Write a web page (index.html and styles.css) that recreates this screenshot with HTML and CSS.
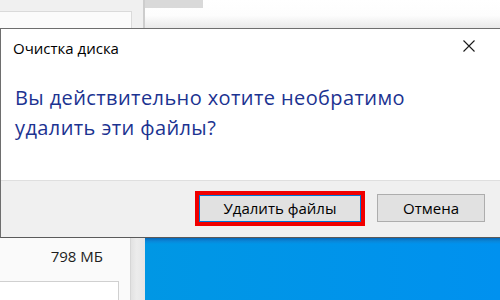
FILE: index.html
```html
<!DOCTYPE html>
<html lang="ru">
<head>
    <meta charset="UTF-8">
    <title>Очистка диска</title>
    <link rel="stylesheet" href="styles.css">
</head>
<body>
    <div class="screen">
        <div class="top-view">
            <div class="side-panel">
                <div class="inner-box"></div>
            </div>
            <div class="divider"></div>
            <div class="window-area">
                <div class="tab"></div>
            </div>
        </div>

        <div class="dialog">
            <div class="dialog-head">
                <div class="title">Очистка диска</div>
                <svg class="close" width="12" height="12" viewBox="0 0 12 12">
                    <path d="M0.5 0.5 L11.5 11.5 M11.5 0.5 L0.5 11.5" stroke="#1a1a1a" stroke-width="1.1" fill="none" />
                </svg>
            </div>
            <div class="dialog-body">
                <p class="question">Вы действительно хотите необратимо<br>удалить эти файлы?</p>
            </div>
            <div class="dialog-foot">
                <div class="mark">
                    <button class="btn default">Удалить файлы</button>
                </div>
                <button class="btn">Отмена</button>
            </div>
        </div>

        <div class="bottom-view">
            <div class="list-panel">
                <div class="size">798 МБ</div>
                <div class="list-box"></div>
            </div>
            <div class="strip"></div>
            <div class="desktop"></div>
        </div>
    </div>
</body>
</html>
```

FILE: styles.css
```css
html, body {
    width: 500px;
    height: 300px;
    margin: 0;
    overflow: hidden;
}

.screen {
    display: flex;
    flex-direction: column;
    width: 500px;
    height: 300px;
    font-family: "Open Sans", "Noto Sans", sans-serif;
}

/* верх: окно под диалогом */
.top-view {
    display: flex;
    height: 28px;
}
.top-view > .side-panel {
    display: flex;
    flex-direction: column;
    justify-content: flex-end;
    width: 143px;
    background-color: #f0f0f0;
}
.top-view > .side-panel > .inner-box {
    width: 131px;
    height: 16px;
    border-top: 1px solid #dadada;
    border-right: 1px solid #dadada;
    background-color: #fbfbfb;
}
.top-view > .divider {
    width: 2px;
    background-color: #cdcdcd;
}
.top-view > .window-area {
    flex: 1;
    background: linear-gradient(to bottom, #ffffff 0%, #fdfdfd 55%, #e9e9e9 100%);
}
.top-view > .window-area > .tab {
    width: 58px;
    height: 8px;
    background-color: #d9d9d9;
}

/* диалог */
.dialog {
    display: flex;
    flex-direction: column;
    height: 208px;
    border-top: 1px solid #6e6e6e;
    border-left: 1px solid #6e6e6e;
    border-bottom: 1px solid #5a5a5a;
    background-color: #ffffff;
}
.dialog > .dialog-head {
    display: flex;
    justify-content: space-between;
    align-items: flex-start;
    padding: 9px 25px 0 12px;
}
.dialog > .dialog-head > .title {
    color: #000000;
    font-size: 15px;
    line-height: 20px;
}
.dialog > .dialog-head > .close {
    margin-top: 2px;
}
.dialog > .dialog-body {
    flex: 1;
    padding: 25px 0 0 14px;
}
.dialog > .dialog-body > .question {
    margin: 0;
    color: #1c3391;
    font-size: 20px;
    line-height: 30px;
    letter-spacing: 0.4px;
}
.dialog > .dialog-foot {
    display: flex;
    justify-content: flex-end;
    align-items: center;
    gap: 12px;
    height: 54px;
    padding: 0 15px 2px 0;
    border-top: 1px solid #dfdfdf;
    background-color: #f0f0f0;
}
.dialog > .dialog-foot > .mark {
    display: flex;
    border: 4px solid #f00000;
}
.btn {
    width: 108px;
    height: 28px;
    margin: 0;
    padding: 0;
    border: 1px solid #adadad;
    background-color: #e1e1e1;
    color: #000000;
    font-family: "Open Sans", "Noto Sans", sans-serif;
    font-size: 15px;
}
.btn.default {
    width: 162px;
    height: 27px;
    border-color: #0078d7;
}

/* низ: рабочий стол */
.bottom-view {
    flex: 1;
    display: flex;
}
.bottom-view > .list-panel {
    display: flex;
    flex-direction: column;
    width: 130px;
    background-color: #fafafa;
}
.bottom-view > .list-panel > .size {
    width: 103px;
    padding-top: 7px;
    color: #1e1e1e;
    font-size: 15px;
    line-height: 22px;
    text-align: right;
}
.bottom-view > .list-panel > .list-box {
    flex: 1;
    width: 118px;
    margin-top: 14px;
    border-top: 1px solid #d0d0d0;
    border-right: 1px solid #d0d0d0;
    background-color: #ffffff;
}
.bottom-view > .strip {
    width: 14px;
    border-left: 1px solid #d6d6d6;
    background: linear-gradient(to right, #e2e2e2, #ececec 40%, #e6e6e6);
}
.bottom-view > .desktop {
    flex: 1;
    background:
        linear-gradient(to bottom, #0567b8 0px, #0a86d8 3px, rgba(0, 0, 0, 0) 6px),
        linear-gradient(to right, #0097e4, #0091ef);
}
```
